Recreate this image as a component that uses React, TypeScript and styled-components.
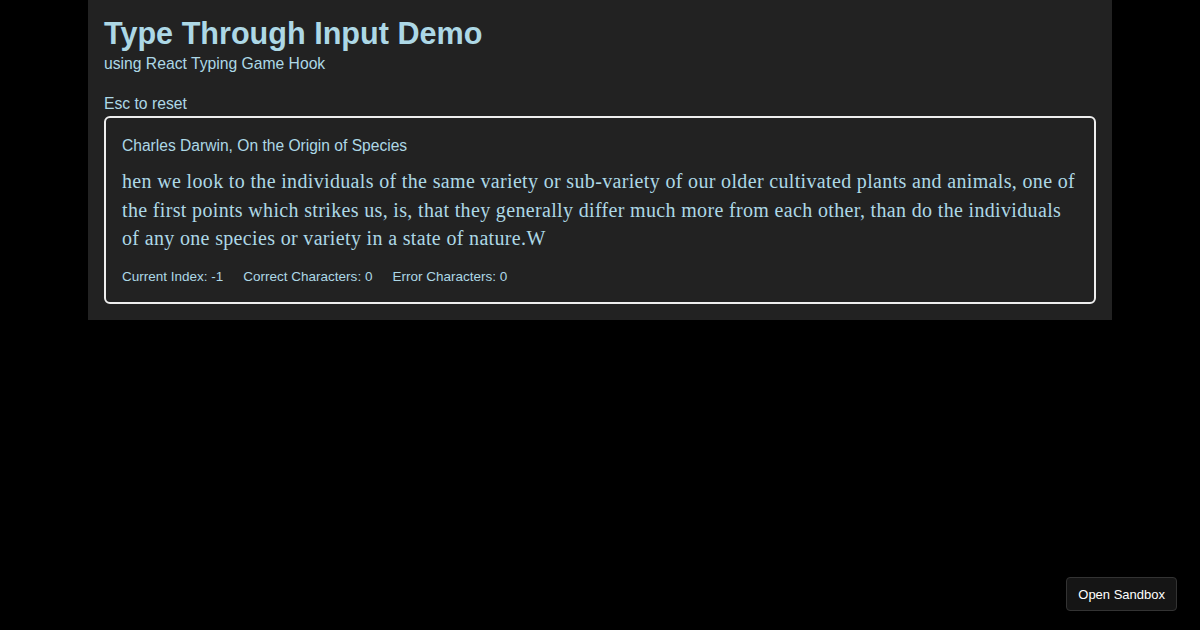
import styled, { createGlobalStyle } from "styled-components";

const GlobalStyle = createGlobalStyle`
  html, body {
    margin: 0;
    padding: 0;
    background: #000;
    font-family: "Liberation Sans", Arial, sans-serif;
  }
`;

const Page = styled.div`
  width: 1024px;
  margin: 0 auto;
  padding: 15px 16px 16px;
  box-sizing: border-box;
  background: #222;
  color: lightblue;
`;

const Title = styled.h1`
  margin: 0;
  font-size: 30.6px;
  line-height: 36px;
  font-weight: 700;
`;

const Subtitle = styled.p`
  margin: 0;
  font-size: 15.7px;
  line-height: 26px;
`;

const Hint = styled.p`
  margin: 18px 0 3px;
  font-size: 15.7px;
  line-height: 18px;
`;

const Card = styled.div`
  border: 2px solid #eee;
  border-radius: 6px;
  padding: 19px 16px 17px;
`;

const Source = styled.div`
  font-size: 15.6px;
  line-height: 18px;
`;

const Passage = styled.p`
  margin: 12px 0 16.5px;
  font-family: "Liberation Serif", "Times New Roman", serif;
  font-size: 20px;
  letter-spacing: 0.34px;
  line-height: 28.5px;
`;

const Stats = styled.div`
  display: flex;
  gap: 20px;
  font-size: 13.5px;
  line-height: 16px;
`;

const SandboxButton = styled.button`
  position: fixed;
  right: 23px;
  bottom: 19px;
  height: 34px;
  padding: 0 11px;
  background: #151515;
  color: #fff;
  border: 1px solid #333;
  border-radius: 4px;
  font-family: "Liberation Sans", Arial, sans-serif;
  font-size: 13px;
`;

const stats = [
  ["Current Index", -1],
  ["Correct Characters", 0],
  ["Error Characters", 0],
];

export default function App() {
  return (
    <>
      <GlobalStyle />
      <Page>
        <Title>Type Through Input Demo</Title>
        <Subtitle>using React Typing Game Hook</Subtitle>
        <Hint>Esc to reset</Hint>
        <Card>
          <Source>Charles Darwin, On the Origin of Species</Source>
          <Passage>
            hen we look to the individuals of the same variety or sub-variety of our older cultivated plants and
            animals, one of the first points which strikes us, is, that they generally differ much more from each
            other, than do the individuals of any one species or variety in a state of nature.W
          </Passage>
          <Stats>
            {stats.map(([label, value]) => (
              <span key={label}>
                {label}: {value}
              </span>
            ))}
          </Stats>
        </Card>
      </Page>
      <SandboxButton>Open Sandbox</SandboxButton>
    </>
  );
}
